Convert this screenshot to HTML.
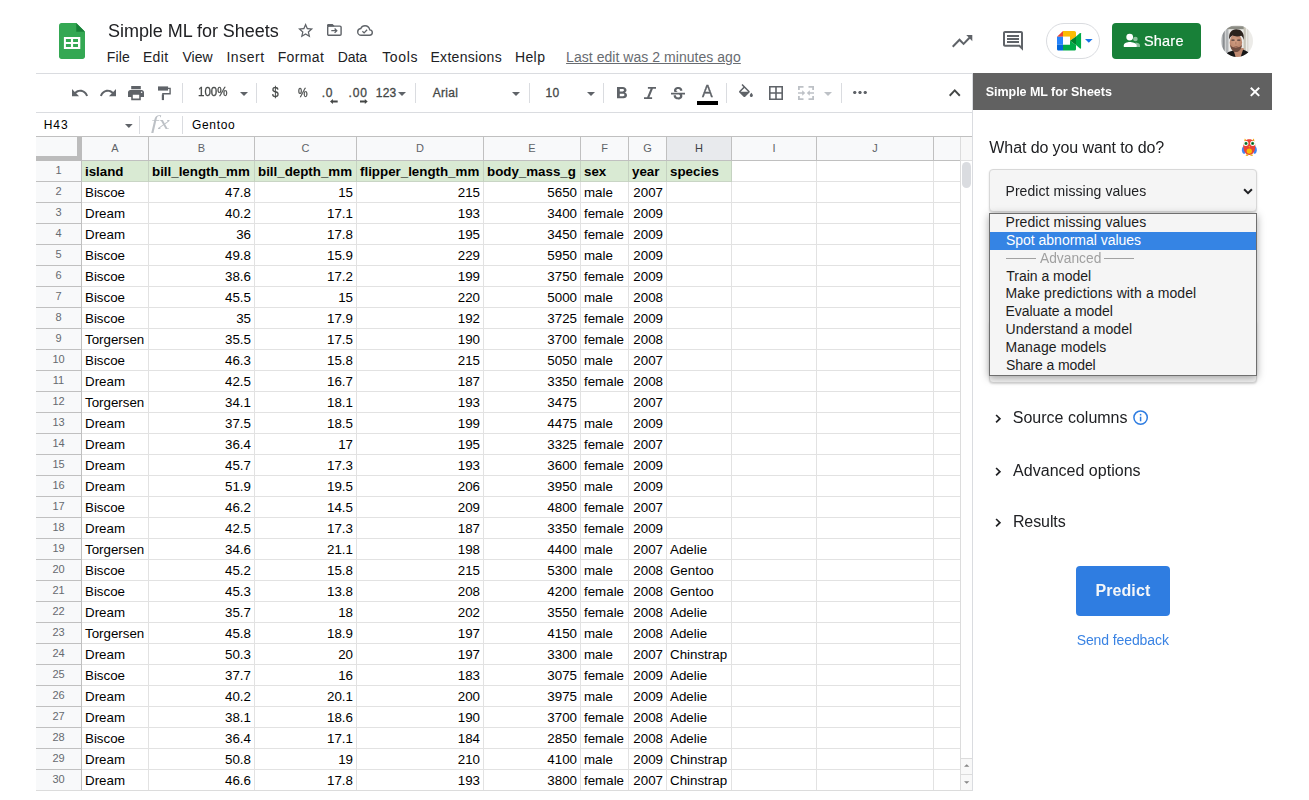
<!DOCTYPE html>
<html lang="en"><head><meta charset="utf-8"><title>Simple ML for Sheets</title>
<style>
*{box-sizing:border-box}
html,body{margin:0;padding:0;background:#fff}
body{width:1309px;height:800px;overflow:hidden;font-family:"Liberation Sans",sans-serif;color:#202124}
#app{position:relative;width:1309px;height:800px;overflow:hidden;background:#fff}
.abs{position:absolute}
.t{position:absolute;white-space:pre;line-height:1}
svg{position:absolute;display:block;overflow:visible}
.menu{position:absolute;top:50px;font-size:14px;line-height:16px;color:#202124;white-space:pre}
.sep{position:absolute;width:1px;background:#dadce0}
.ch{position:absolute;top:137px;height:23px;background:#f8f9fa;border-right:1px solid #c0c0c0;font-size:11px;color:#5f6368;text-align:center;line-height:23px}
.rh{position:absolute;left:36px;width:46px;height:21px;background:#f8f9fa;border-right:1px solid #c0c0c0;border-bottom:1px solid #c0c0c0;font-size:11px;color:#666a6f;text-align:center;line-height:18px}
.c{position:absolute;height:21px;font-size:13.333px;line-height:20px;color:#000;white-space:pre;overflow:hidden;padding:1px 3px 0 3px}
.r{text-align:right}
.b{font-weight:700}
.opt{position:absolute;left:1006px;font-size:14px;line-height:18px;white-space:pre;color:#202124}
</style></head><body><div id="app">
<header id="docs-titlebar" aria-label="Document header">
<svg style="left:59px;top:23px" width="26" height="36" viewBox="0 0 26 36">
<path d="M2.500 0H17.250L26 8.750V33.500c0 1.380-1.120 2.500-2.500 2.500h-21C1.120 36 0 34.880 0 33.500v-31C0 1.120 1.120 0 2.500 0z" fill="#34a853"/>
<path d="M17.250 0L26 8.750h-8.750z" fill="#188038"/>
<path d="M4.900 13.900v12h16.400v-12zm2 2.200h5v2.800h-5zm7.200 0H19v2.800h-4.900zM6.900 21.100h5v2.800h-5zm7.200 0H19v2.800h-4.900z" fill="#fff"/>
</svg>
<div class="t" style="left:107.59px;top:22px;font-size:18px;color:#202124;letter-spacing:-0.039px;will-change:transform">Simple ML for Sheets</div>
<svg style="left:297.60px;top:22.50px" width="15.20" height="14.50" viewBox="2 2 20 19" preserveAspectRatio="none"><path d="M22 9.24l-7.19-.62L12 2 9.19 8.630 2 9.240l5.46 4.730L5.82 21 12 17.270 18.180 21l-1.630-7.030L22 9.240zM12 15.400l-3.760 2.270 1-4.280-3.320-2.880 4.380-.38L12 6.100l1.710 4.040 4.380.38-3.320 2.880 1 4.280L12 15.400z" fill="#5f6368" /></svg>
<svg style="left:327.100px;top:24px" width="14.800" height="12" viewBox="0 0 14.800 12"><path d="M1.400 0h4.200l1.700 1.700v.7H0V1.400C0 .6.600 0 1.400 0z" fill="#5f6368"/><rect x=".7" y="2.100" width="13.400" height="9.200" rx="1.100" fill="none" stroke="#5f6368" stroke-width="1.400"/><path d="M4.300 6.700h5.300M7.600 4.500l2.200 2.200-2.200 2.200" fill="none" stroke="#5f6368" stroke-width="1.300"/></svg>
<svg style="left:357px;top:24.900px" width="16" height="11" viewBox="0 0 16 11"><path d="M4.200 10.300h8.300c1.500 0 2.800-1.200 2.800-2.700 0-1.400-1.100-2.600-2.500-2.700C12.300 2.500 10.400.7 8 .7 6.100.7 4.500 1.800 3.800 3.500 2 3.700.7 5.100.7 6.900c0 1.900 1.600 3.400 3.500 3.400z" fill="none" stroke="#5f6368" stroke-width="1.400"/><path d="M5.400 6.300l1.700 1.600 3-3.100" fill="none" stroke="#5f6368" stroke-width="1.300"/></svg>
<div class="t" style="left:106.67px;top:50px;font-size:14px;color:#202124;letter-spacing:0.229px;">File</div>
<div class="t" style="left:142.88px;top:50px;font-size:14px;color:#202124;letter-spacing:0.387px;">Edit</div>
<div class="t" style="left:182.44px;top:50px;font-size:14px;color:#202124;letter-spacing:0.058px;">View</div>
<div class="t" style="left:226.45px;top:50px;font-size:14px;color:#202124;letter-spacing:0.543px;">Insert</div>
<div class="t" style="left:277.68px;top:50px;font-size:14px;color:#202124;letter-spacing:0.355px;">Format</div>
<div class="t" style="left:337.68px;top:50px;font-size:14px;color:#202124;letter-spacing:-0.033px;">Data</div>
<div class="t" style="left:382.19px;top:50px;font-size:14px;color:#202124;letter-spacing:0.656px;">Tools</div>
<div class="t" style="left:430.48px;top:50px;font-size:14px;color:#202124;letter-spacing:0.303px;">Extensions</div>
<div class="t" style="left:514.88px;top:50px;font-size:14px;color:#202124;letter-spacing:0.425px;">Help</div>
<div class="t" style="left:566.08px;top:50px;font-size:14px;color:#686c71;letter-spacing:0.043px;text-decoration:underline;text-underline-offset:1px;text-decoration-thickness:1px">Last edit was 2 minutes ago</div>
<svg style="left:952.00px;top:34.60px" width="20.30" height="12.40" viewBox="2 6 20 12" preserveAspectRatio="none"><path d="M16 6l2.290 2.290-4.880 4.880-4-4L2 16.590 3.410 18l6-6 4 4 6.300-6.290L22 12V6z" fill="#5f6368" /></svg>
<svg style="left:1003.00px;top:30.80px" width="20.00" height="19.80" viewBox="2 2 20 20" preserveAspectRatio="none"><path d="M21.990 4c0-1.100-.89-2-1.990-2H4c-1.100 0-2 .9-2 2v12c0 1.100.9 2 2 2h14l4 4-.010-18zM20 4v13.170L18.830 16H4V4h16zM6 12h12v2H6zm0-3h12v2H6zm0-3h12v2H6z" fill="#5f6368" /></svg>
<div class="abs" style="left:1046px;top:23px;width:54px;height:36px;border:1px solid #dadce0;border-radius:18px;background:#fff"></div>
<svg style="left:1057px;top:31.200px" width="24.100" height="19.600" viewBox="0 0 24.100 19.600">
<path d="M0 5.750h6V0z" fill="#ea4335"/>
<path d="M6 0h11.300c.95 0 1.700.75 1.700 1.700V5.600L13 9.800V5.750H6z" fill="#fbbc04"/>
<path d="M0 5.750h6v7.750H0z" fill="#2684fc"/>
<path d="M0 13.500h6v6.100H1.700C.75 19.600 0 18.850 0 17.900z" fill="#0066da"/>
<path d="M6 13.500h7V9.800l6 4.300v3.800c0 .95-.75 1.700-1.700 1.700H6z" fill="#00ac47"/>
<path d="M13 9.800l6-4.300v8.600z" fill="#00832d"/>
<path d="M19 5.500l4-3.400c.45-.38 1.100-.05 1.100.5v14.400c0 .55-.65.880-1.100.5L19 14.100z" fill="#00ac47"/>
<path d="M6 5.750h7v7.750H6z" fill="#fff"/>
</svg>
<svg style="left:1085.300px;top:39.100px" width="7.600" height="3.900" viewBox="0 0 10 5"><path d="M0 0h10L5 5z" fill="#1a73e8"/></svg>
<div class="abs" style="left:1112px;top:23px;width:89px;height:36px;border-radius:4px;background:#188038"></div>
<svg style="left:1123px;top:33px" width="18" height="15" viewBox="0 0 18 15">
<circle cx="12.400" cy="6" r="2.300" fill="#fff" opacity=".5"/><path d="M12.500 9.500c2 0 4.500.9 4.500 2.700V14h-4z" fill="#fff" opacity=".5"/>
<circle cx="6.700" cy="4.100" r="3.400" fill="#fff"/><path d="M6.700 9C4.500 9 .8 10.100.8 12.200V14h12.800v-1.800C13.600 10.100 8.900 9 6.700 9z" fill="#fff"/></svg>
<div class="t" style="left:1144.47px;top:34px;font-size:14.5px;color:#fff;letter-spacing:0.191px;-webkit-text-stroke:.2px #fff;will-change:transform">Share</div>
<svg style="left:1221px;top:25px" width="32" height="32" viewBox="0 0 32 32">
<defs><clipPath id="av"><circle cx="16" cy="16" r="16"/></clipPath><filter id="bl" x="-20%" y="-20%" width="140%" height="140%"><feGaussianBlur stdDeviation=".55"/></filter>
<radialGradient id="sk" cx=".45" cy=".4" r=".7"><stop offset="0" stop-color="#d3a084"/><stop offset="1" stop-color="#b07a62"/></radialGradient></defs>
<g clip-path="url(#av)"><g filter="url(#bl)">
<rect x="-4" y="-4" width="40" height="40" fill="#ecebe8"/>
<rect x="-2" y="-2" width="10" height="36" fill="#cfd0d1"/>
<rect x="1.500" y="5" width="2.200" height="24" fill="#8a8d91"/>
<rect x="5.200" y="4" width="1.600" height="24" fill="#a9acaf"/>
<rect x="6" y="1.200" width="17" height="3" fill="#8b8c84"/>
<rect x="22.600" y="2" width="2.200" height="30" fill="#c5c2b6"/>
<rect x="26" y="4" width="1.500" height="26" fill="#dad8d1"/>
<path d="M13 23h9.500l3.500 10H12z" fill="#c08b72"/>
<path d="M5 30c.8-2.600 3.500-3.800 7.600-4.500l2 6.500H4z" fill="#151518"/>
<path d="M28.500 29c-1-2.300-3.200-3.300-6.500-4.300l-2.500 7.800h9z" fill="#151518"/>
<ellipse cx="14.900" cy="17.500" rx="6.200" ry="8.600" fill="url(#sk)"/>
<path d="M9.200 19.500c.3 4.800 2.600 7.600 5.600 7.600s5.700-2.600 6.200-7.400c-1 1.600-2.300 2.400-3.300 2.500-1-.9-4.200-.9-5.400 0-1.100-.2-2.300-1-3.100-2.700z" fill="#6f4d3f"/>
<path d="M12.200 22.600c1.400-.7 3.800-.7 5.200 0-1.200.5-4 .5-5.200 0z" fill="#a8705e"/>
<path d="M8.300 14.500C7.300 7.800 10.500 4.200 15.200 4.200s8.600 3 7.400 10.800c-.5-2.300-1.200-3.500-2.300-4.200-2.500.8-6.500.8-8.900-.2-1.500 1-2.500 2-3.100 3.900z" fill="#2c201c"/>
<rect x="10.400" y="14.600" width="3.200" height="1.200" rx=".5" fill="#4a3a36"/><rect x="16.200" y="14.600" width="3.200" height="1.200" rx=".5" fill="#4a3a36"/>
<rect x="14.200" y="16.500" width="1.300" height="3" rx=".6" fill="#b17e66"/>
</g></g></svg>
</header>
<div id="docs-toolbar" role="toolbar" aria-label="Main toolbar">
<div class="abs" style="left:36px;top:73px;width:937px;height:1px;background:#dadce0"></div>
<div class="abs" style="left:36px;top:112px;width:937px;height:1px;background:#dadce0"></div>
<svg style="left:72.00px;top:88.80px" width="16.00" height="7.30" viewBox="2 7 20.47 9" preserveAspectRatio="none"><path d="M12.5 8c-2.65 0-5.05.99-6.9 2.6L2 7v9h9l-3.62-3.62c1.39-1.16 3.16-1.88 5.12-1.88 3.54 0 6.55 2.31 7.6 5.5l2.37-.78C21.08 11.03 17.15 8 12.5 8z" fill="#5f6368" /></svg>
<svg style="left:100.10px;top:88.80px" width="16.00" height="7.30" viewBox="1.54 7 20.46 9" preserveAspectRatio="none"><path d="M18.4 10.6C16.55 8.99 14.15 8 11.5 8c-4.65 0-8.58 3.03-9.96 7.22L3.9 16c1.05-3.19 4.05-5.5 7.6-5.5 1.95 0 3.73.72 5.12 1.88L13 16h9V7l-3.6 3.6z" fill="#5f6368" /></svg>
<svg style="left:128.10px;top:85.60px" width="16.00" height="14.20" viewBox="2 3 20 18" preserveAspectRatio="none"><path d="M19 8H5c-1.66 0-3 1.34-3 3v6h4v4h12v-4h4v-6c0-1.66-1.34-3-3-3zm-3 11H8v-5h8v5zm3-7c-.55 0-1-.45-1-1s.45-1 1-1 1 .45 1 1-.45 1-1 1zm-1-9H6v4h12V3z" fill="#5f6368" /></svg>
<svg style="left:158.100px;top:85.800px" width="13.500" height="14.500" viewBox="0 0 13.500 14.500"><path d="M0 .4h10.100v4.200H0z" fill="#5f6368"/><path d="M10 2.400h2.100v5.400H4.900v2" stroke="#5f6368" stroke-width="1.400" fill="none"/><path d="M3.800 8.500h2.200v5.600H3.800z" fill="#5f6368"/></svg>
<div class="sep" style="left:182px;top:83px;height:20px"></div>
<div class="t" style="left:197.86px;top:86px;font-size:12px;color:#444746;transform:scaleX(0.9600);transform-origin:0 0;-webkit-text-stroke:.3px #444746">100%</div>
<svg style="left:240.40px;top:91.50px" width="8.00" height="4.00" viewBox="7 10 10 5" preserveAspectRatio="none"><path d="M7 10l5 5 5-5z" fill="#5f6368" /></svg>
<div class="sep" style="left:256px;top:83px;height:20px"></div>
<div class="t" style="left:271.69px;top:85px;font-size:14px;color:#444746;transform:scaleX(0.8605);transform-origin:0 0;-webkit-text-stroke:.3px #444746">$</div>
<div class="t" style="left:298.46px;top:87px;font-size:12px;color:#444746;transform:scaleX(0.9013);transform-origin:0 0;-webkit-text-stroke:.3px #444746">%</div>
<div class="t" style="left:321.84px;top:87px;font-size:12px;color:#444746;letter-spacing:0.6px;-webkit-text-stroke:.3px #444746">.0</div>
<svg style="left:330.300px;top:98.500px" width="7.700" height="5" viewBox="0 0 8 5"><path d="M0 2.500L3 0v1.500H8v2H3V5z" fill="#444746"/></svg>
<div class="t" style="left:348.54px;top:87px;font-size:12px;color:#444746;letter-spacing:0.806px;-webkit-text-stroke:.3px #444746">.00</div>
<svg style="left:360.300px;top:98.500px" width="7.700" height="5" viewBox="0 0 8 5"><path d="M8 2.500L5 0v1.500H0v2h5V5z" fill="#444746"/></svg>
<div class="t" style="left:375.82px;top:87px;font-size:12px;color:#444746;letter-spacing:0.156px;-webkit-text-stroke:.3px #444746">123</div>
<svg style="left:398.20px;top:91.80px" width="8.00" height="4.00" viewBox="7 10 10 5" preserveAspectRatio="none"><path d="M7 10l5 5 5-5z" fill="#5f6368" /></svg>
<div class="sep" style="left:415px;top:83px;height:20px"></div>
<div class="t" style="left:432.8px;top:87px;font-size:12px;color:#444746;letter-spacing:0.278px;-webkit-text-stroke:.3px #444746">Arial</div>
<svg style="left:511.90px;top:91.50px" width="8.00" height="4.00" viewBox="7 10 10 5" preserveAspectRatio="none"><path d="M7 10l5 5 5-5z" fill="#5f6368" /></svg>
<div class="sep" style="left:529px;top:83px;height:20px"></div>
<div class="t" style="left:545.42px;top:87px;font-size:12px;color:#444746;letter-spacing:0.538px;-webkit-text-stroke:.3px #444746">10</div>
<svg style="left:587.10px;top:91.50px" width="8.00" height="4.00" viewBox="7 10 10 5" preserveAspectRatio="none"><path d="M7 10l5 5 5-5z" fill="#5f6368" /></svg>
<div class="sep" style="left:603px;top:83px;height:20px"></div>
<svg style="left:616.70px;top:87.30px" width="10.00" height="11.30" viewBox="7 4 10.75 14" preserveAspectRatio="none"><path d="M15.6 10.79c.97-.67 1.65-1.77 1.65-2.79 0-2.26-1.75-4-4-4H7v14h7.04c2.09 0 3.71-1.7 3.71-3.79 0-1.52-.86-2.82-2.15-3.42zM10 6.5h3c.83 0 1.5.67 1.5 1.5s-.67 1.5-1.5 1.5h-3v-3zm3.500 9H10v-3h3.500c.83 0 1.5.67 1.5 1.5s-.67 1.5-1.5 1.5z" fill="#5f6368" /></svg>
<svg style="left:644px;top:87px" width="12" height="12" viewBox="0 0 12 12"><path d="M3.900 0H12v1.800H8.900L5.400 10.200H8.100V12H0v-1.800h3.100L6.600 1.800H3.900z" fill="#5f6368"/></svg>
<svg style="left:671.00px;top:87.20px" width="14.00" height="12.40" viewBox="3 3 18 15.01" preserveAspectRatio="none"><path d="M7.24 8.75c-.26-.48-.39-1.03-.39-1.67 0-.61.13-1.16.4-1.67.26-.5.63-.93 1.11-1.29.48-.35 1.05-.63 1.7-.83.66-.19 1.39-.29 2.18-.29.81 0 1.54.11 2.21.34.66.22 1.23.54 1.69.94.47.4.83.88 1.08 1.43.25.55.38 1.15.38 1.81h-3.01c0-.31-.05-.59-.15-.85-.09-.27-.24-.49-.44-.68-.2-.19-.45-.33-.75-.44-.3-.1-.66-.16-1.06-.16-.39 0-.74.04-1.03.13-.29.09-.53.21-.72.36-.19.16-.34.34-.44.55-.1.21-.15.43-.15.66 0 .48.25.88.74 1.21.38.25.77.48 1.41.7H7.39c-.05-.08-.11-.17-.15-.25zM21 12v-2H3v2h9.620c.18.07.4.14.55.2.37.17.66.34.87.51.21.17.35.36.43.57.07.2.11.43.11.69 0 .23-.05.45-.14.66-.09.2-.23.38-.42.53-.19.15-.42.26-.71.35-.29.08-.63.13-1.01.13-.43 0-.83-.04-1.18-.13s-.66-.23-.91-.42c-.25-.19-.45-.44-.59-.75-.14-.31-.25-.76-.25-1.21H6.400c0 .55.08 1.13.24 1.58.16.45.37.85.65 1.210.28.35.6.66.98.92.37.26.78.48 1.220.65.44.17.9.3 1.38.39.48.08.96.13 1.44.13.8 0 1.53-.09 2.180-.28s1.210-.45 1.670-.79c.46-.34.82-.77 1.070-1.270s.38-1.070.38-1.710c0-.6-.1-1.140-.31-1.610-.05-.11-.11-.23-.17-.33H21z" fill="#5f6368" /></svg>
<div class="t" style="left:701.7px;top:84px;font-size:16px;color:#5f6368;transform:scaleX(1.0012);transform-origin:0 0;-webkit-text-stroke:.35px #5f6368">A</div>
<div class="abs" style="left:697px;top:101px;width:21px;height:4px;background:#000"></div>
<div class="sep" style="left:726px;top:83px;height:20px"></div>
<svg style="left:739.10px;top:84.20px" width="13.90" height="13.10" viewBox="2.997 0 18.003 17.0" preserveAspectRatio="none"><path d="M16.56 8.94L7.62 0 6.21 1.41l2.38 2.38-5.15 5.15c-.59.59-.59 1.54 0 2.12l5.5 5.5c.29.29.68.44 1.060.44s.77-.15 1.060-.44l5.5-5.5c.59-.58.59-1.53 0-2.120zM5.21 10L10 5.21 14.79 10H5.21zM19 11.5s-2 2.17-2 3.5c0 1.1.9 2 2 2s2-.9 2-2c0-1.330-2-3.500-2-3.500z" fill="#5f6368" /></svg>
<svg style="left:769px;top:86px" width="14" height="14" viewBox="0 0 14 14"><path d="M0 0h14v14H0zM1.600 1.600v4.600h4.600V1.600zM7.800 1.600v4.600h4.600V1.600zM1.600 7.800v4.600h4.600V7.800zM7.800 7.800v4.600h4.600V7.800z" fill="#5f6368" fill-rule="evenodd"/></svg>
<svg style="left:798px;top:86px" width="16" height="14" viewBox="0 0 16 14"><g fill="#bdc1c6">
<path d="M0 0h5.500v1.800H1.800V4H0zM16 0h-5.500v1.800h3.700V4H16zM0 14h5.500v-1.800H1.800V10H0zM16 14h-5.500v-1.800h3.700V10H16z"/>
<path d="M0 6.200h4.200V4.300L7.200 7 4.200 9.700V7.800H0zM16 6.200h-4.200V4.300L8.800 7l3 2.700V7.800H16z"/></g></svg>
<svg style="left:824.00px;top:91.80px" width="8.00" height="4.00" viewBox="7 10 10 5" preserveAspectRatio="none"><path d="M7 10l5 5 5-5z" fill="#bdc1c6" /></svg>
<div class="sep" style="left:841px;top:83px;height:20px"></div>
<svg style="left:853.00px;top:91.20px" width="14.00" height="3.10" viewBox="4 10 16 4" preserveAspectRatio="none"><path d="M6 10c-1.1 0-2 .9-2 2s.9 2 2 2 2-.9 2-2-.9-2-2-2zm12 0c-1.1 0-2 .9-2 2s.9 2 2 2 2-.9 2-2-.9-2-2-2zm-6 0c-1.1 0-2 .9-2 2s.9 2 2 2 2-.9 2-2-.9-2-2-2z" fill="#5f6368" /></svg>
<svg style="left:948.50px;top:89.00px" width="11.50" height="7.40" viewBox="6 8 12 7.41" preserveAspectRatio="none"><path d="M12 8l-6 6 1.41 1.41L12 10.83l4.59 4.58L18 14z" fill="#444746" /></svg>
</div>
<div id="formula-bar" aria-label="Formula bar">
<div class="t" style="left:43.66px;top:119px;font-size:12px;color:#000;letter-spacing:0.969px;">H43</div>
<svg style="left:125.30px;top:124.00px" width="7.70" height="4.00" viewBox="7 10 10 5" preserveAspectRatio="none"><path d="M7 10l5 5 5-5z" fill="#5f6368" /></svg>
<div class="sep" style="left:139px;top:116px;height:18px"></div>
<div class="t" style="left:151px;top:113.100px;font-family:'Liberation Serif',serif;font-style:italic;font-size:19.500px;color:#bdc1c6;transform:scaleX(1.33);transform-origin:0 0">fx</div>
<div class="sep" style="left:182px;top:116px;height:18px"></div>
<div class="t" style="left:191.94px;top:119px;font-size:12px;color:#000;letter-spacing:0.677px;">Gentoo</div>
</div>
<main id="grid" role="grid" aria-label="Spreadsheet">
<div class="abs" style="left:36px;top:136px;width:937px;height:1px;background:#c0c0c0"></div>
<div class="abs" style="left:36px;top:137px;width:924px;height:24px;background:#f8f9fa"></div>
<div class="ch" style="left:82px;width:67px">A</div>
<div class="ch" style="left:149px;width:106px">B</div>
<div class="ch" style="left:255px;width:102px">C</div>
<div class="ch" style="left:357px;width:127px">D</div>
<div class="ch" style="left:484px;width:97px">E</div>
<div class="ch" style="left:581px;width:48px">F</div>
<div class="ch" style="left:629px;width:38px">G</div>
<div class="ch" style="left:667px;width:65px;background:#e8eaed;color:#3c4043">H</div>
<div class="ch" style="left:732px;width:85px">I</div>
<div class="ch" style="left:817px;width:117px">J</div>
<div class="ch" style="left:934px;width:27px;border-right:0"></div>
<div class="abs" style="left:82px;top:160px;width:878px;height:1px;background:#c0c0c0"></div>
<div class="rh" style="top:161px">1</div>
<div class="abs" style="left:82px;top:181px;width:878px;height:1px;background:#e2e2e2"></div>
<div class="rh" style="top:182px">2</div>
<div class="abs" style="left:82px;top:202px;width:878px;height:1px;background:#e2e2e2"></div>
<div class="rh" style="top:203px">3</div>
<div class="abs" style="left:82px;top:223px;width:878px;height:1px;background:#e2e2e2"></div>
<div class="rh" style="top:224px">4</div>
<div class="abs" style="left:82px;top:244px;width:878px;height:1px;background:#e2e2e2"></div>
<div class="rh" style="top:245px">5</div>
<div class="abs" style="left:82px;top:265px;width:878px;height:1px;background:#e2e2e2"></div>
<div class="rh" style="top:266px">6</div>
<div class="abs" style="left:82px;top:286px;width:878px;height:1px;background:#e2e2e2"></div>
<div class="rh" style="top:287px">7</div>
<div class="abs" style="left:82px;top:307px;width:878px;height:1px;background:#e2e2e2"></div>
<div class="rh" style="top:308px">8</div>
<div class="abs" style="left:82px;top:328px;width:878px;height:1px;background:#e2e2e2"></div>
<div class="rh" style="top:329px">9</div>
<div class="abs" style="left:82px;top:349px;width:878px;height:1px;background:#e2e2e2"></div>
<div class="rh" style="top:350px">10</div>
<div class="abs" style="left:82px;top:370px;width:878px;height:1px;background:#e2e2e2"></div>
<div class="rh" style="top:371px">11</div>
<div class="abs" style="left:82px;top:391px;width:878px;height:1px;background:#e2e2e2"></div>
<div class="rh" style="top:392px">12</div>
<div class="abs" style="left:82px;top:412px;width:878px;height:1px;background:#e2e2e2"></div>
<div class="rh" style="top:413px">13</div>
<div class="abs" style="left:82px;top:433px;width:878px;height:1px;background:#e2e2e2"></div>
<div class="rh" style="top:434px">14</div>
<div class="abs" style="left:82px;top:454px;width:878px;height:1px;background:#e2e2e2"></div>
<div class="rh" style="top:455px">15</div>
<div class="abs" style="left:82px;top:475px;width:878px;height:1px;background:#e2e2e2"></div>
<div class="rh" style="top:476px">16</div>
<div class="abs" style="left:82px;top:496px;width:878px;height:1px;background:#e2e2e2"></div>
<div class="rh" style="top:497px">17</div>
<div class="abs" style="left:82px;top:517px;width:878px;height:1px;background:#e2e2e2"></div>
<div class="rh" style="top:518px">18</div>
<div class="abs" style="left:82px;top:538px;width:878px;height:1px;background:#e2e2e2"></div>
<div class="rh" style="top:539px">19</div>
<div class="abs" style="left:82px;top:559px;width:878px;height:1px;background:#e2e2e2"></div>
<div class="rh" style="top:560px">20</div>
<div class="abs" style="left:82px;top:580px;width:878px;height:1px;background:#e2e2e2"></div>
<div class="rh" style="top:581px">21</div>
<div class="abs" style="left:82px;top:601px;width:878px;height:1px;background:#e2e2e2"></div>
<div class="rh" style="top:602px">22</div>
<div class="abs" style="left:82px;top:622px;width:878px;height:1px;background:#e2e2e2"></div>
<div class="rh" style="top:623px">23</div>
<div class="abs" style="left:82px;top:643px;width:878px;height:1px;background:#e2e2e2"></div>
<div class="rh" style="top:644px">24</div>
<div class="abs" style="left:82px;top:664px;width:878px;height:1px;background:#e2e2e2"></div>
<div class="rh" style="top:665px">25</div>
<div class="abs" style="left:82px;top:685px;width:878px;height:1px;background:#e2e2e2"></div>
<div class="rh" style="top:686px">26</div>
<div class="abs" style="left:82px;top:706px;width:878px;height:1px;background:#e2e2e2"></div>
<div class="rh" style="top:707px">27</div>
<div class="abs" style="left:82px;top:727px;width:878px;height:1px;background:#e2e2e2"></div>
<div class="rh" style="top:728px">28</div>
<div class="abs" style="left:82px;top:748px;width:878px;height:1px;background:#e2e2e2"></div>
<div class="rh" style="top:749px">29</div>
<div class="abs" style="left:82px;top:769px;width:878px;height:1px;background:#e2e2e2"></div>
<div class="rh" style="top:770px">30</div>
<div class="abs" style="left:82px;top:790px;width:878px;height:1px;background:#e2e2e2"></div>
<div class="abs" style="left:82px;top:161px;width:650px;height:20px;background:#d9ead3"></div>
<div class="abs" style="left:82px;top:181px;width:650px;height:1px;background:#c9d5c5"></div>
<div class="abs" style="left:148px;top:161px;width:1px;height:630px;background:#e2e2e2"></div>
<div class="abs" style="left:254px;top:161px;width:1px;height:630px;background:#e2e2e2"></div>
<div class="abs" style="left:356px;top:161px;width:1px;height:630px;background:#e2e2e2"></div>
<div class="abs" style="left:483px;top:161px;width:1px;height:630px;background:#e2e2e2"></div>
<div class="abs" style="left:580px;top:161px;width:1px;height:630px;background:#e2e2e2"></div>
<div class="abs" style="left:628px;top:161px;width:1px;height:630px;background:#e2e2e2"></div>
<div class="abs" style="left:666px;top:161px;width:1px;height:630px;background:#e2e2e2"></div>
<div class="abs" style="left:731px;top:161px;width:1px;height:630px;background:#e2e2e2"></div>
<div class="abs" style="left:816px;top:161px;width:1px;height:630px;background:#e2e2e2"></div>
<div class="abs" style="left:933px;top:161px;width:1px;height:630px;background:#e2e2e2"></div>
<div class="abs" style="left:148px;top:161px;width:1px;height:21px;background:#c5d2c1"></div>
<div class="abs" style="left:254px;top:161px;width:1px;height:21px;background:#c5d2c1"></div>
<div class="abs" style="left:356px;top:161px;width:1px;height:21px;background:#c5d2c1"></div>
<div class="abs" style="left:483px;top:161px;width:1px;height:21px;background:#c5d2c1"></div>
<div class="abs" style="left:580px;top:161px;width:1px;height:21px;background:#c5d2c1"></div>
<div class="abs" style="left:628px;top:161px;width:1px;height:21px;background:#c5d2c1"></div>
<div class="abs" style="left:666px;top:161px;width:1px;height:21px;background:#c5d2c1"></div>
<div class="abs" style="left:731px;top:161px;width:1px;height:21px;background:#c5d2c1"></div>
<div class="c b" style="left:82px;top:161px;width:66px">island</div>
<div class="c b" style="left:149px;top:161px;width:105px">bill_length_mm</div>
<div class="c b" style="left:255px;top:161px;width:101px">bill_depth_mm</div>
<div class="c b" style="left:357px;top:161px;width:126px">flipper_length_mm</div>
<div class="c b" style="left:484px;top:161px;width:96px">body_mass_g</div>
<div class="c b" style="left:581px;top:161px;width:47px">sex</div>
<div class="c b" style="left:629px;top:161px;width:37px">year</div>
<div class="c b" style="left:667px;top:161px;width:64px">species</div>
<div class="c" style="left:82px;top:182px;width:66px">Biscoe</div>
<div class="c r" style="left:149px;top:182px;width:105px">47.8</div>
<div class="c r" style="left:255px;top:182px;width:101px">15</div>
<div class="c r" style="left:357px;top:182px;width:126px">215</div>
<div class="c r" style="left:484px;top:182px;width:96px">5650</div>
<div class="c" style="left:581px;top:182px;width:47px">male</div>
<div class="c r" style="left:629px;top:182px;width:37px">2007</div>
<div class="c" style="left:82px;top:203px;width:66px">Dream</div>
<div class="c r" style="left:149px;top:203px;width:105px">40.2</div>
<div class="c r" style="left:255px;top:203px;width:101px">17.1</div>
<div class="c r" style="left:357px;top:203px;width:126px">193</div>
<div class="c r" style="left:484px;top:203px;width:96px">3400</div>
<div class="c" style="left:581px;top:203px;width:47px">female</div>
<div class="c r" style="left:629px;top:203px;width:37px">2009</div>
<div class="c" style="left:82px;top:224px;width:66px">Dream</div>
<div class="c r" style="left:149px;top:224px;width:105px">36</div>
<div class="c r" style="left:255px;top:224px;width:101px">17.8</div>
<div class="c r" style="left:357px;top:224px;width:126px">195</div>
<div class="c r" style="left:484px;top:224px;width:96px">3450</div>
<div class="c" style="left:581px;top:224px;width:47px">female</div>
<div class="c r" style="left:629px;top:224px;width:37px">2009</div>
<div class="c" style="left:82px;top:245px;width:66px">Biscoe</div>
<div class="c r" style="left:149px;top:245px;width:105px">49.8</div>
<div class="c r" style="left:255px;top:245px;width:101px">15.9</div>
<div class="c r" style="left:357px;top:245px;width:126px">229</div>
<div class="c r" style="left:484px;top:245px;width:96px">5950</div>
<div class="c" style="left:581px;top:245px;width:47px">male</div>
<div class="c r" style="left:629px;top:245px;width:37px">2009</div>
<div class="c" style="left:82px;top:266px;width:66px">Biscoe</div>
<div class="c r" style="left:149px;top:266px;width:105px">38.6</div>
<div class="c r" style="left:255px;top:266px;width:101px">17.2</div>
<div class="c r" style="left:357px;top:266px;width:126px">199</div>
<div class="c r" style="left:484px;top:266px;width:96px">3750</div>
<div class="c" style="left:581px;top:266px;width:47px">female</div>
<div class="c r" style="left:629px;top:266px;width:37px">2009</div>
<div class="c" style="left:82px;top:287px;width:66px">Biscoe</div>
<div class="c r" style="left:149px;top:287px;width:105px">45.5</div>
<div class="c r" style="left:255px;top:287px;width:101px">15</div>
<div class="c r" style="left:357px;top:287px;width:126px">220</div>
<div class="c r" style="left:484px;top:287px;width:96px">5000</div>
<div class="c" style="left:581px;top:287px;width:47px">male</div>
<div class="c r" style="left:629px;top:287px;width:37px">2008</div>
<div class="c" style="left:82px;top:308px;width:66px">Biscoe</div>
<div class="c r" style="left:149px;top:308px;width:105px">35</div>
<div class="c r" style="left:255px;top:308px;width:101px">17.9</div>
<div class="c r" style="left:357px;top:308px;width:126px">192</div>
<div class="c r" style="left:484px;top:308px;width:96px">3725</div>
<div class="c" style="left:581px;top:308px;width:47px">female</div>
<div class="c r" style="left:629px;top:308px;width:37px">2009</div>
<div class="c" style="left:82px;top:329px;width:66px">Torgersen</div>
<div class="c r" style="left:149px;top:329px;width:105px">35.5</div>
<div class="c r" style="left:255px;top:329px;width:101px">17.5</div>
<div class="c r" style="left:357px;top:329px;width:126px">190</div>
<div class="c r" style="left:484px;top:329px;width:96px">3700</div>
<div class="c" style="left:581px;top:329px;width:47px">female</div>
<div class="c r" style="left:629px;top:329px;width:37px">2008</div>
<div class="c" style="left:82px;top:350px;width:66px">Biscoe</div>
<div class="c r" style="left:149px;top:350px;width:105px">46.3</div>
<div class="c r" style="left:255px;top:350px;width:101px">15.8</div>
<div class="c r" style="left:357px;top:350px;width:126px">215</div>
<div class="c r" style="left:484px;top:350px;width:96px">5050</div>
<div class="c" style="left:581px;top:350px;width:47px">male</div>
<div class="c r" style="left:629px;top:350px;width:37px">2007</div>
<div class="c" style="left:82px;top:371px;width:66px">Dream</div>
<div class="c r" style="left:149px;top:371px;width:105px">42.5</div>
<div class="c r" style="left:255px;top:371px;width:101px">16.7</div>
<div class="c r" style="left:357px;top:371px;width:126px">187</div>
<div class="c r" style="left:484px;top:371px;width:96px">3350</div>
<div class="c" style="left:581px;top:371px;width:47px">female</div>
<div class="c r" style="left:629px;top:371px;width:37px">2008</div>
<div class="c" style="left:82px;top:392px;width:66px">Torgersen</div>
<div class="c r" style="left:149px;top:392px;width:105px">34.1</div>
<div class="c r" style="left:255px;top:392px;width:101px">18.1</div>
<div class="c r" style="left:357px;top:392px;width:126px">193</div>
<div class="c r" style="left:484px;top:392px;width:96px">3475</div>
<div class="c r" style="left:629px;top:392px;width:37px">2007</div>
<div class="c" style="left:82px;top:413px;width:66px">Dream</div>
<div class="c r" style="left:149px;top:413px;width:105px">37.5</div>
<div class="c r" style="left:255px;top:413px;width:101px">18.5</div>
<div class="c r" style="left:357px;top:413px;width:126px">199</div>
<div class="c r" style="left:484px;top:413px;width:96px">4475</div>
<div class="c" style="left:581px;top:413px;width:47px">male</div>
<div class="c r" style="left:629px;top:413px;width:37px">2009</div>
<div class="c" style="left:82px;top:434px;width:66px">Dream</div>
<div class="c r" style="left:149px;top:434px;width:105px">36.4</div>
<div class="c r" style="left:255px;top:434px;width:101px">17</div>
<div class="c r" style="left:357px;top:434px;width:126px">195</div>
<div class="c r" style="left:484px;top:434px;width:96px">3325</div>
<div class="c" style="left:581px;top:434px;width:47px">female</div>
<div class="c r" style="left:629px;top:434px;width:37px">2007</div>
<div class="c" style="left:82px;top:455px;width:66px">Dream</div>
<div class="c r" style="left:149px;top:455px;width:105px">45.7</div>
<div class="c r" style="left:255px;top:455px;width:101px">17.3</div>
<div class="c r" style="left:357px;top:455px;width:126px">193</div>
<div class="c r" style="left:484px;top:455px;width:96px">3600</div>
<div class="c" style="left:581px;top:455px;width:47px">female</div>
<div class="c r" style="left:629px;top:455px;width:37px">2009</div>
<div class="c" style="left:82px;top:476px;width:66px">Dream</div>
<div class="c r" style="left:149px;top:476px;width:105px">51.9</div>
<div class="c r" style="left:255px;top:476px;width:101px">19.5</div>
<div class="c r" style="left:357px;top:476px;width:126px">206</div>
<div class="c r" style="left:484px;top:476px;width:96px">3950</div>
<div class="c" style="left:581px;top:476px;width:47px">male</div>
<div class="c r" style="left:629px;top:476px;width:37px">2009</div>
<div class="c" style="left:82px;top:497px;width:66px">Biscoe</div>
<div class="c r" style="left:149px;top:497px;width:105px">46.2</div>
<div class="c r" style="left:255px;top:497px;width:101px">14.5</div>
<div class="c r" style="left:357px;top:497px;width:126px">209</div>
<div class="c r" style="left:484px;top:497px;width:96px">4800</div>
<div class="c" style="left:581px;top:497px;width:47px">female</div>
<div class="c r" style="left:629px;top:497px;width:37px">2007</div>
<div class="c" style="left:82px;top:518px;width:66px">Dream</div>
<div class="c r" style="left:149px;top:518px;width:105px">42.5</div>
<div class="c r" style="left:255px;top:518px;width:101px">17.3</div>
<div class="c r" style="left:357px;top:518px;width:126px">187</div>
<div class="c r" style="left:484px;top:518px;width:96px">3350</div>
<div class="c" style="left:581px;top:518px;width:47px">female</div>
<div class="c r" style="left:629px;top:518px;width:37px">2009</div>
<div class="c" style="left:82px;top:539px;width:66px">Torgersen</div>
<div class="c r" style="left:149px;top:539px;width:105px">34.6</div>
<div class="c r" style="left:255px;top:539px;width:101px">21.1</div>
<div class="c r" style="left:357px;top:539px;width:126px">198</div>
<div class="c r" style="left:484px;top:539px;width:96px">4400</div>
<div class="c" style="left:581px;top:539px;width:47px">male</div>
<div class="c r" style="left:629px;top:539px;width:37px">2007</div>
<div class="c" style="left:667px;top:539px;width:64px">Adelie</div>
<div class="c" style="left:82px;top:560px;width:66px">Biscoe</div>
<div class="c r" style="left:149px;top:560px;width:105px">45.2</div>
<div class="c r" style="left:255px;top:560px;width:101px">15.8</div>
<div class="c r" style="left:357px;top:560px;width:126px">215</div>
<div class="c r" style="left:484px;top:560px;width:96px">5300</div>
<div class="c" style="left:581px;top:560px;width:47px">male</div>
<div class="c r" style="left:629px;top:560px;width:37px">2008</div>
<div class="c" style="left:667px;top:560px;width:64px">Gentoo</div>
<div class="c" style="left:82px;top:581px;width:66px">Biscoe</div>
<div class="c r" style="left:149px;top:581px;width:105px">45.3</div>
<div class="c r" style="left:255px;top:581px;width:101px">13.8</div>
<div class="c r" style="left:357px;top:581px;width:126px">208</div>
<div class="c r" style="left:484px;top:581px;width:96px">4200</div>
<div class="c" style="left:581px;top:581px;width:47px">female</div>
<div class="c r" style="left:629px;top:581px;width:37px">2008</div>
<div class="c" style="left:667px;top:581px;width:64px">Gentoo</div>
<div class="c" style="left:82px;top:602px;width:66px">Dream</div>
<div class="c r" style="left:149px;top:602px;width:105px">35.7</div>
<div class="c r" style="left:255px;top:602px;width:101px">18</div>
<div class="c r" style="left:357px;top:602px;width:126px">202</div>
<div class="c r" style="left:484px;top:602px;width:96px">3550</div>
<div class="c" style="left:581px;top:602px;width:47px">female</div>
<div class="c r" style="left:629px;top:602px;width:37px">2008</div>
<div class="c" style="left:667px;top:602px;width:64px">Adelie</div>
<div class="c" style="left:82px;top:623px;width:66px">Torgersen</div>
<div class="c r" style="left:149px;top:623px;width:105px">45.8</div>
<div class="c r" style="left:255px;top:623px;width:101px">18.9</div>
<div class="c r" style="left:357px;top:623px;width:126px">197</div>
<div class="c r" style="left:484px;top:623px;width:96px">4150</div>
<div class="c" style="left:581px;top:623px;width:47px">male</div>
<div class="c r" style="left:629px;top:623px;width:37px">2008</div>
<div class="c" style="left:667px;top:623px;width:64px">Adelie</div>
<div class="c" style="left:82px;top:644px;width:66px">Dream</div>
<div class="c r" style="left:149px;top:644px;width:105px">50.3</div>
<div class="c r" style="left:255px;top:644px;width:101px">20</div>
<div class="c r" style="left:357px;top:644px;width:126px">197</div>
<div class="c r" style="left:484px;top:644px;width:96px">3300</div>
<div class="c" style="left:581px;top:644px;width:47px">male</div>
<div class="c r" style="left:629px;top:644px;width:37px">2007</div>
<div class="c" style="left:667px;top:644px;width:64px">Chinstrap</div>
<div class="c" style="left:82px;top:665px;width:66px">Biscoe</div>
<div class="c r" style="left:149px;top:665px;width:105px">37.7</div>
<div class="c r" style="left:255px;top:665px;width:101px">16</div>
<div class="c r" style="left:357px;top:665px;width:126px">183</div>
<div class="c r" style="left:484px;top:665px;width:96px">3075</div>
<div class="c" style="left:581px;top:665px;width:47px">female</div>
<div class="c r" style="left:629px;top:665px;width:37px">2009</div>
<div class="c" style="left:667px;top:665px;width:64px">Adelie</div>
<div class="c" style="left:82px;top:686px;width:66px">Dream</div>
<div class="c r" style="left:149px;top:686px;width:105px">40.2</div>
<div class="c r" style="left:255px;top:686px;width:101px">20.1</div>
<div class="c r" style="left:357px;top:686px;width:126px">200</div>
<div class="c r" style="left:484px;top:686px;width:96px">3975</div>
<div class="c" style="left:581px;top:686px;width:47px">male</div>
<div class="c r" style="left:629px;top:686px;width:37px">2009</div>
<div class="c" style="left:667px;top:686px;width:64px">Adelie</div>
<div class="c" style="left:82px;top:707px;width:66px">Dream</div>
<div class="c r" style="left:149px;top:707px;width:105px">38.1</div>
<div class="c r" style="left:255px;top:707px;width:101px">18.6</div>
<div class="c r" style="left:357px;top:707px;width:126px">190</div>
<div class="c r" style="left:484px;top:707px;width:96px">3700</div>
<div class="c" style="left:581px;top:707px;width:47px">female</div>
<div class="c r" style="left:629px;top:707px;width:37px">2008</div>
<div class="c" style="left:667px;top:707px;width:64px">Adelie</div>
<div class="c" style="left:82px;top:728px;width:66px">Biscoe</div>
<div class="c r" style="left:149px;top:728px;width:105px">36.4</div>
<div class="c r" style="left:255px;top:728px;width:101px">17.1</div>
<div class="c r" style="left:357px;top:728px;width:126px">184</div>
<div class="c r" style="left:484px;top:728px;width:96px">2850</div>
<div class="c" style="left:581px;top:728px;width:47px">female</div>
<div class="c r" style="left:629px;top:728px;width:37px">2008</div>
<div class="c" style="left:667px;top:728px;width:64px">Adelie</div>
<div class="c" style="left:82px;top:749px;width:66px">Dream</div>
<div class="c r" style="left:149px;top:749px;width:105px">50.8</div>
<div class="c r" style="left:255px;top:749px;width:101px">19</div>
<div class="c r" style="left:357px;top:749px;width:126px">210</div>
<div class="c r" style="left:484px;top:749px;width:96px">4100</div>
<div class="c" style="left:581px;top:749px;width:47px">male</div>
<div class="c r" style="left:629px;top:749px;width:37px">2009</div>
<div class="c" style="left:667px;top:749px;width:64px">Chinstrap</div>
<div class="c" style="left:82px;top:770px;width:66px">Dream</div>
<div class="c r" style="left:149px;top:770px;width:105px">46.6</div>
<div class="c r" style="left:255px;top:770px;width:101px">17.8</div>
<div class="c r" style="left:357px;top:770px;width:126px">193</div>
<div class="c r" style="left:484px;top:770px;width:96px">3800</div>
<div class="c" style="left:581px;top:770px;width:47px">female</div>
<div class="c r" style="left:629px;top:770px;width:37px">2007</div>
<div class="c" style="left:667px;top:770px;width:64px">Chinstrap</div>
<div class="abs" style="left:77px;top:137px;width:5px;height:24px;background:#bcbcbc"></div>
<div class="abs" style="left:36px;top:156px;width:46px;height:5px;background:#bcbcbc"></div>
<div class="abs" style="left:960px;top:137px;width:12px;height:653px;background:#fff;border-left:1px solid #dcdcdc"></div>
<div class="abs" style="left:961px;top:137px;width:11px;height:24px;background:#f8f8f8;border-bottom:1px solid #e0e0e0"></div>
<div class="abs" style="left:962px;top:162px;width:9px;height:26px;border-radius:4.500px;background:#dadce0"></div>
<div class="abs" style="left:961px;top:758px;width:11px;height:32px;background:#f8f8f8;border-top:1px solid #dcdcdc"></div>
<div class="abs" style="left:961px;top:774px;width:11px;height:1px;background:#dcdcdc"></div>
<svg style="left:963.800px;top:764px" width="5.400" height="3" viewBox="0 0 6 3"><path d="M0 3h6L3 0z" fill="#868686"/></svg>
<svg style="left:963.800px;top:781px" width="5.400" height="3" viewBox="0 0 6 3"><path d="M0 0h6L3 3z" fill="#868686"/></svg>
<div class="abs" style="left:36px;top:790px;width:937px;height:1px;background:#dcdcdc"></div>
</main>
<div id="sidebar-fields">
<div class="abs" style="left:989px;top:320px;width:268px;height:63px;border:1px solid #d8d8d8;border-radius:4px;background:#f5f5f5;box-shadow:0 1px 2px rgba(0,0,0,.15)"></div>
<div class="abs" style="left:989px;top:169px;width:268px;height:43px;border:1px solid #d8d8d8;border-radius:4px;background:#f5f5f5;box-shadow:0 1px 2px rgba(0,0,0,.15)"></div>
</div>
<div id="select-popup" role="listbox" aria-label="What do you want to do?">
<div class="abs" style="left:989px;top:213px;width:268px;height:163px;border:1px solid #6f6f6f;background:#f5f5f5;box-shadow:0 2px 8px rgba(0,0,0,.35)"></div>
<div class="abs" style="left:990px;top:232px;width:266px;height:18px;background:#3584e4"></div>
<div class="t" style="left:1005.48px;top:215px;font-size:14px;color:#1c1c1c;letter-spacing:0.07px;">Predict missing values</div>
<div class="t" style="left:1005.98px;top:233px;font-size:14px;color:#fff;letter-spacing:-0.016px;">Spot abnormal values</div>
<div class="abs" style="left:1006px;top:258px;width:30px;height:1px;background:#a2a2a2"></div>
<div class="t" style="left:1039.8px;top:251px;font-size:14px;color:#a0a0a0;transform:scaleX(0.9847);transform-origin:0 0;">Advanced</div>
<div class="abs" style="left:1104px;top:258px;width:30px;height:1px;background:#a2a2a2"></div>
<div class="t" style="left:1006.29px;top:269px;font-size:14px;color:#1c1c1c;letter-spacing:-0.026px;">Train a model</div>
<div class="t" style="left:1005.48px;top:286px;font-size:14px;color:#1c1c1c;letter-spacing:0.087px;">Make predictions with a model</div>
<div class="t" style="left:1005.48px;top:304px;font-size:14px;color:#1c1c1c;letter-spacing:-0.048px;">Evaluate a model</div>
<div class="t" style="left:1005.54px;top:322px;font-size:14px;color:#1c1c1c;letter-spacing:0.026px;">Understand a model</div>
<div class="t" style="left:1005.48px;top:340px;font-size:14px;color:#1c1c1c;letter-spacing:0.1px;">Manage models</div>
<div class="t" style="left:1005.98px;top:358px;font-size:14px;color:#1c1c1c;letter-spacing:-0.108px;">Share a model</div>
</div>
<aside id="sidebar" aria-label="Simple ML for Sheets" style="position:absolute;left:0;top:0;width:1309px;height:800px;will-change:transform">
<div class="abs" style="left:972px;top:74px;width:1px;height:717px;background:#dadce0"></div>
<div class="abs" style="left:973px;top:73px;width:299px;height:37px;background:#616161"></div>
<div class="t" style="left:985.79px;top:86px;font-size:12.5px;color:#fff;font-weight:700;letter-spacing:-0.043px;">Simple ML for Sheets</div>
<svg style="left:1250px;top:87.200px" width="10" height="9.600" viewBox="0 0 10 9.600"><path d="M.8.700l8.400 8.200M9.200.700L.8 8.900" stroke="#fff" stroke-width="2" fill="none"/></svg>
<div class="t" style="left:989.34px;top:140px;font-size:16px;color:#202124;letter-spacing:-0.094px;">What do you want to do?</div>
<svg style="left:1234px;top:132px" width="30" height="30" viewBox="0 0 30 30">
<path d="M10.800 6.400l2 2.400-2.600.6z" fill="#f9ab00"/><path d="M19.900 6.400l-2 2.400 2.600.6z" fill="#f9ab00"/>
<path d="M9.600 14c-1.700 1.300-2.300 4-1.300 6.200.5 1.100 1.400 1.700 2.600 1.500l.7-6z" fill="#4285f4"/>
<path d="M21.100 14c1.700 1.300 2.300 4 1.300 6.200-.5 1.100-1.400 1.700-2.600 1.500l-.7-6z" fill="#4285f4"/>
<path d="M15.300 7.300c3.600 0 6 2.200 6 6.200 0 5.500-2.200 9.500-6 9.500s-6-4-6-9.500c0-4 2.400-6.200 6-6.200z" fill="#ea4335"/>
<circle cx="15.300" cy="19.100" r="2.700" fill="#fbbc04"/>
<circle cx="11.800" cy="11.300" r="2.600" fill="#fff"/><circle cx="18.800" cy="11.300" r="2.600" fill="#fff"/>
<circle cx="12" cy="11.400" r="1.550" fill="#1e8e3e"/><circle cx="18.600" cy="11.400" r="1.550" fill="#1e8e3e"/>
<circle cx="12" cy="11.400" r=".6" fill="#0d3b1a"/><circle cx="18.600" cy="11.400" r=".6" fill="#0d3b1a"/>
<path d="M14.500 14h1.600l-.8 1.500z" fill="#fbbc04"/>
<path d="M12.200 22.400h2v1.300h-2.600zM16.400 22.400h2l.6 1.300h-2.600z" fill="#e8a200"/>
</svg>
<div class="t" style="left:1005.48px;top:184px;font-size:14px;color:#202124;letter-spacing:0.07px;">Predict missing values</div>
<svg style="left:1243px;top:187.500px" width="10" height="7" viewBox="0 0 10 7"><path d="M1.100 1.300L5 5.200l3.900-3.900" stroke="#202124" stroke-width="2" fill="none"/></svg>
<svg style="left:995px;top:414.40px" width="6.400" height="9.400" viewBox="0 0 6.400 9.400"><path d="M1.100 1l3.800 3.700L1.100 8.400" stroke="#202124" stroke-width="1.700" fill="none"/></svg>
<div class="t" style="left:1012.81px;top:410px;font-size:16px;color:#202124;">Source columns</div>
<svg style="left:995px;top:467.40px" width="6.400" height="9.400" viewBox="0 0 6.400 9.400"><path d="M1.100 1l3.800 3.700L1.100 8.400" stroke="#202124" stroke-width="1.700" fill="none"/></svg>
<div class="t" style="left:1013.1px;top:463px;font-size:16px;color:#202124;letter-spacing:0.018px;">Advanced options</div>
<svg style="left:995px;top:518.40px" width="6.400" height="9.400" viewBox="0 0 6.400 9.400"><path d="M1.100 1l3.800 3.700L1.100 8.400" stroke="#202124" stroke-width="1.700" fill="none"/></svg>
<div class="t" style="left:1012.89px;top:514px;font-size:16px;color:#202124;letter-spacing:-0.083px;">Results</div>
<svg style="left:1133.100px;top:409.600px" width="15.200" height="15.200" viewBox="0 0 15.200 15.200"><circle cx="7.600" cy="7.600" r="6.700" fill="none" stroke="#2f7de1" stroke-width="1.500"/><rect x="6.850" y="6.700" width="1.500" height="4.600" fill="#2f7de1"/><rect x="6.850" y="3.900" width="1.500" height="1.600" fill="#2f7de1"/></svg>
<div class="abs" style="left:1076px;top:566px;width:94px;height:50px;border-radius:4px;background:#2f7de1"></div>
<div class="t" style="left:1095.44px;top:583px;font-size:16px;color:#f4f6f8;font-weight:700;letter-spacing:0.09px;">Predict</div>
<div class="t" style="left:1076.67px;top:633px;font-size:14px;color:#3a83e3;letter-spacing:-0.098px;">Send feedback</div>
</aside>
</div></body></html>
